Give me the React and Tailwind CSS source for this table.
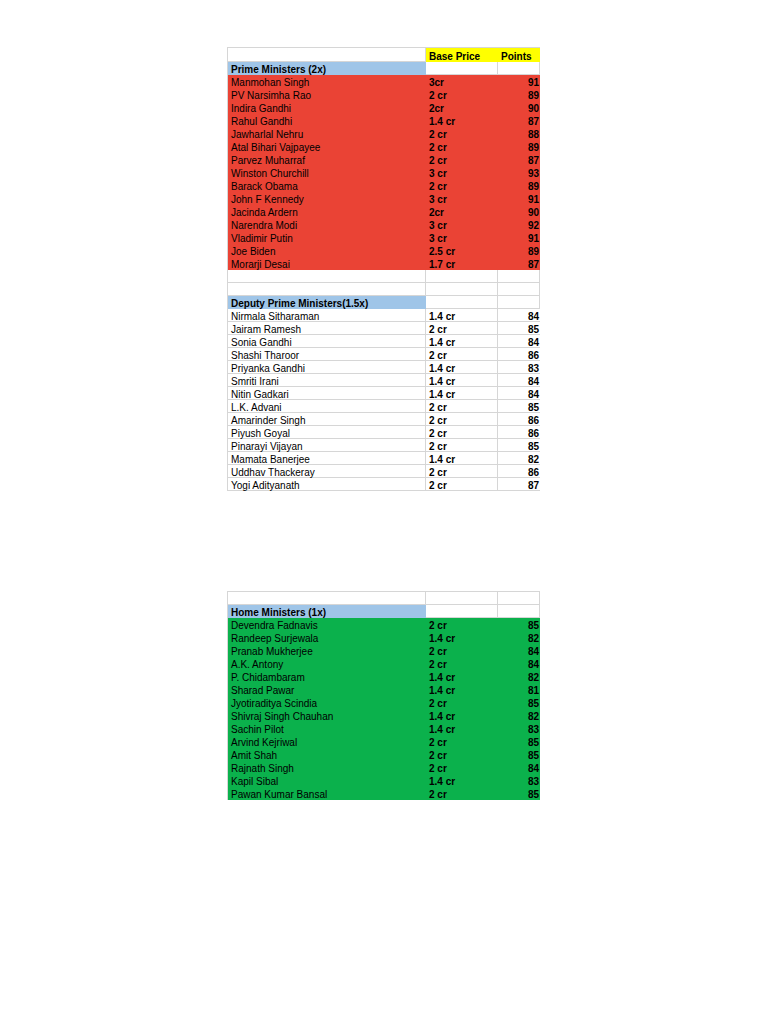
const prime = [
  ["Manmohan Singh", "3cr", "91"],
  ["PV Narsimha Rao", "2 cr", "89"],
  ["Indira Gandhi", "2cr", "90"],
  ["Rahul Gandhi", "1.4 cr", "87"],
  ["Jawharlal Nehru", "2 cr", "88"],
  ["Atal Bihari Vajpayee", "2 cr", "89"],
  ["Parvez Muharraf", "2 cr", "87"],
  ["Winston Churchill", "3 cr", "93"],
  ["Barack Obama", "2 cr", "89"],
  ["John F Kennedy", "3 cr", "91"],
  ["Jacinda Ardern", "2cr", "90"],
  ["Narendra Modi", "3 cr", "92"],
  ["Vladimir Putin", "3 cr", "91"],
  ["Joe Biden", "2.5 cr", "89"],
  ["Morarji Desai", "1.7 cr", "87"],
];

const deputy = [
  ["Nirmala Sitharaman", "1.4 cr", "84"],
  ["Jairam Ramesh", "2 cr", "85"],
  ["Sonia Gandhi", "1.4 cr", "84"],
  ["Shashi Tharoor", "2 cr", "86"],
  ["Priyanka Gandhi", "1.4 cr", "83"],
  ["Smriti Irani", "1.4 cr", "84"],
  ["Nitin Gadkari", "1.4 cr", "84"],
  ["L.K. Advani", "2 cr", "85"],
  ["Amarinder Singh", "2 cr", "86"],
  ["Piyush Goyal", "2 cr", "86"],
  ["Pinarayi Vijayan", "2 cr", "85"],
  ["Mamata Banerjee", "1.4 cr", "82"],
  ["Uddhav Thackeray", "2 cr", "86"],
  ["Yogi Adityanath", "2 cr", "87"],
];

const home = [
  ["Devendra Fadnavis", "2 cr", "85"],
  ["Randeep Surjewala", "1.4 cr", "82"],
  ["Pranab Mukherjee", "2 cr", "84"],
  ["A.K. Antony", "2 cr", "84"],
  ["P. Chidambaram", "1.4 cr", "82"],
  ["Sharad Pawar", "1.4 cr", "81"],
  ["Jyotiraditya Scindia", "2 cr", "85"],
  ["Shivraj Singh Chauhan", "1.4 cr", "82"],
  ["Sachin Pilot", "1.4 cr", "83"],
  ["Arvind Kejriwal", "2 cr", "85"],
  ["Amit Shah", "2 cr", "85"],
  ["Rajnath Singh", "2 cr", "84"],
  ["Kapil Sibal", "1.4 cr", "83"],
  ["Pawan Kumar Bansal", "2 cr", "85"],
];

const row = "grid grid-cols-[198px_72px_42px] grid-rows-[13px] h-[13px]";
const cell = "h-[13px] border-b pt-[1px] leading-[13px] whitespace-nowrap";

function DataRow({ name, price, points, tone }) {
  const fill =
    tone === "red"
      ? "bg-[#ea4335] border-[#ea4335]"
      : tone === "green"
      ? "bg-[#0bb14c] border-[#0bb14c]"
      : "bg-white border-[#d6d6d6]";
  return (
    <div className={`${row} ${fill}`}>
      <div className={`${cell} border-r ${fill} pl-[3px]`}>{name}</div>
      <div className={`${cell} border-r ${fill} pl-[3px] font-bold`}>{price}</div>
      <div className={`${cell} ${fill} pr-[1px] font-bold text-right`}>{points}</div>
    </div>
  );
}

function SectionHead({ title }) {
  return (
    <div className={row}>
      <div className={`${cell} bg-[#9fc5e8] border-r border-[#9fc5e8] pl-[3px] font-bold`}>{title}</div>
      <div className={`${cell} border-r border-[#d6d6d6]`}></div>
      <div className={`${cell} border-[#d6d6d6]`}></div>
    </div>
  );
}

function EmptyRow() {
  return (
    <div className={row}>
      <div className={`${cell} border-r border-[#d6d6d6]`}></div>
      <div className={`${cell} border-r border-[#d6d6d6]`}></div>
      <div className={`${cell} border-[#d6d6d6]`}></div>
    </div>
  );
}

export default function App() {
  return (
    <div
      className="w-[768px] h-[1024px] bg-white text-black text-[10px] pt-[47px] pl-[227px]"
      style={{ fontFamily: '"Liberation Sans", Arial, sans-serif' }}
    >
      <div className="w-[313px] border-t border-l border-r border-[#d6d6d6]">
        <div className="grid grid-cols-[198px_72px_42px] grid-rows-[14px] h-[14px]">
          <div className="h-[14px] border-r border-b border-[#d6d6d6]"></div>
          <div className="h-[14px] bg-[#ffff00] border-r border-b border-[#ffff00] pl-[3px] pt-[2px] leading-[14px] font-bold whitespace-nowrap">Base Price</div>
          <div className="h-[14px] bg-[#ffff00] border-b border-[#ffff00] pl-[3px] pt-[2px] leading-[14px] font-bold">Points</div>
        </div>
        <SectionHead title="Prime Ministers (2x)" />
        {prime.map((r) => (
          <DataRow key={r[0]} name={r[0]} price={r[1]} points={r[2]} tone="red" />
        ))}
        <EmptyRow />
        <EmptyRow />
        <SectionHead title="Deputy Prime Ministers(1.5x)" />
        {deputy.map((r) => (
          <DataRow key={r[0]} name={r[0]} price={r[1]} points={r[2]} />
        ))}
      </div>

      <div className="mt-[100px] w-[313px] border-t border-l border-r border-[#d6d6d6]">
        <EmptyRow />
        <SectionHead title="Home Ministers (1x)" />
        {home.map((r) => (
          <DataRow key={r[0]} name={r[0]} price={r[1]} points={r[2]} tone="green" />
        ))}
      </div>
    </div>
  );
}
